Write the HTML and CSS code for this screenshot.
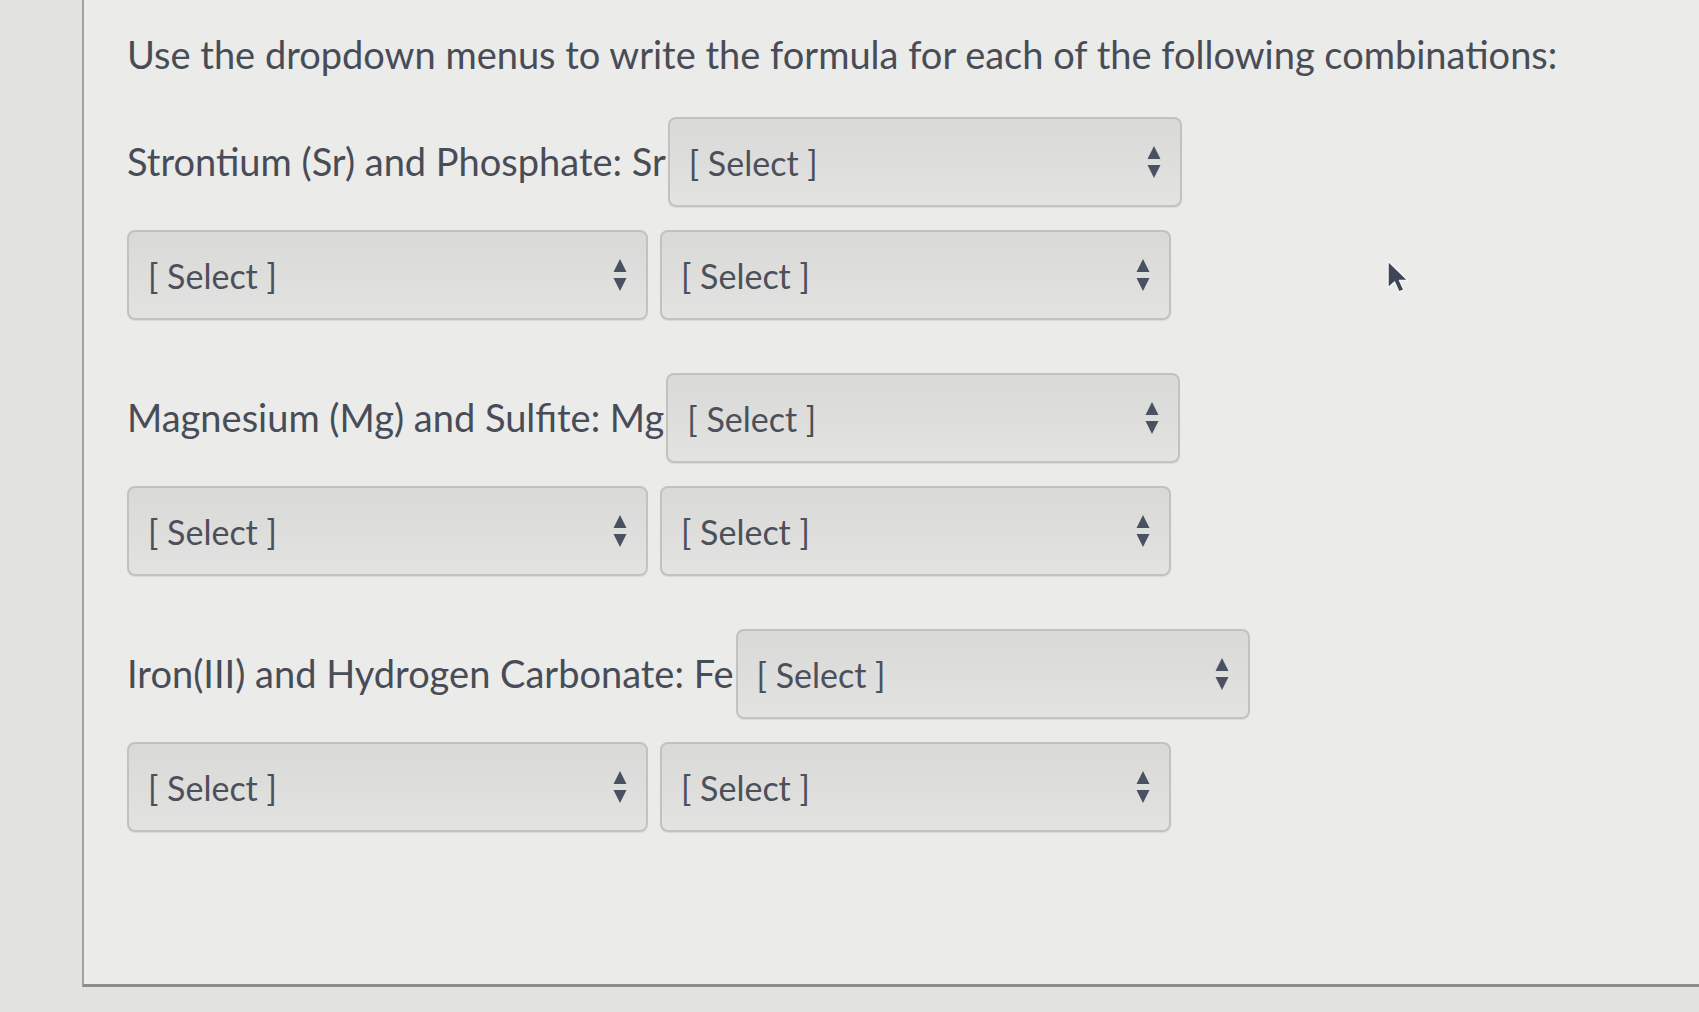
FILE: index.html
```html
<!DOCTYPE html>
<html lang="en">
<head>
<meta charset="utf-8">
<title>Formula dropdowns</title>
<link rel="stylesheet" href="styles.css">
</head>
<body>
<div class="page">
  <div class="frame">
    <p class="title">Use the dropdown menus to write the formula for each of the following combinations:</p>

    <div class="group">
      <div class="row first">
        <span class="label">Strontium (Sr) and Phosphate: Sr</span>
        <div class="select wide1"><span class="val">[ Select ]</span><svg class="arrows" viewBox="0 0 14 36" width="14" height="36"><path d="M7 2 L13.5 15 L0.5 15 Z"/><path d="M0.5 21 L13.5 21 L7 34 Z"/></svg></div>
      </div>
      <div class="row second">
        <div class="select wide2"><span class="val">[ Select ]</span><svg class="arrows" viewBox="0 0 14 36" width="14" height="36"><path d="M7 2 L13.5 15 L0.5 15 Z"/><path d="M0.5 21 L13.5 21 L7 34 Z"/></svg></div>
        <div class="select wide3"><span class="val">[ Select ]</span><svg class="arrows" viewBox="0 0 14 36" width="14" height="36"><path d="M7 2 L13.5 15 L0.5 15 Z"/><path d="M0.5 21 L13.5 21 L7 34 Z"/></svg></div>
      </div>
    </div>

    <div class="group">
      <div class="row first">
        <span class="label">Magnesium (Mg) and Sulfite: Mg</span>
        <div class="select wide1"><span class="val">[ Select ]</span><svg class="arrows" viewBox="0 0 14 36" width="14" height="36"><path d="M7 2 L13.5 15 L0.5 15 Z"/><path d="M0.5 21 L13.5 21 L7 34 Z"/></svg></div>
      </div>
      <div class="row second">
        <div class="select wide2"><span class="val">[ Select ]</span><svg class="arrows" viewBox="0 0 14 36" width="14" height="36"><path d="M7 2 L13.5 15 L0.5 15 Z"/><path d="M0.5 21 L13.5 21 L7 34 Z"/></svg></div>
        <div class="select wide3"><span class="val">[ Select ]</span><svg class="arrows" viewBox="0 0 14 36" width="14" height="36"><path d="M7 2 L13.5 15 L0.5 15 Z"/><path d="M0.5 21 L13.5 21 L7 34 Z"/></svg></div>
      </div>
    </div>

    <div class="group">
      <div class="row first">
        <span class="label">Iron(III) and Hydrogen Carbonate: Fe</span>
        <div class="select wide1"><span class="val">[ Select ]</span><svg class="arrows" viewBox="0 0 14 36" width="14" height="36"><path d="M7 2 L13.5 15 L0.5 15 Z"/><path d="M0.5 21 L13.5 21 L7 34 Z"/></svg></div>
      </div>
      <div class="row second">
        <div class="select wide2"><span class="val">[ Select ]</span><svg class="arrows" viewBox="0 0 14 36" width="14" height="36"><path d="M7 2 L13.5 15 L0.5 15 Z"/><path d="M0.5 21 L13.5 21 L7 34 Z"/></svg></div>
        <div class="select wide3"><span class="val">[ Select ]</span><svg class="arrows" viewBox="0 0 14 36" width="14" height="36"><path d="M7 2 L13.5 15 L0.5 15 Z"/><path d="M0.5 21 L13.5 21 L7 34 Z"/></svg></div>
      </div>
    </div>

    <svg class="cursor" viewBox="0 0 24 36" width="24" height="36"><path d="M2 2 L2 29 L8.5 23 L13 33 L18 31 L13.5 21.5 L22 21.5 Z"/></svg>
  </div>
</div>
</body>
</html>
```

FILE: styles.css
```css
html, body {
  margin: 0;
  padding: 0;
}
body {
  background: #e2e2e0;
  font-family: Lato, "Open Sans", sans-serif;
  color: #484c56;
}
.page {
  width: 1699px;
  height: 1012px;
  overflow: hidden;
}
.frame {
  position: relative;
  margin-left: 82px;
  height: 987px;
  box-sizing: border-box;
  background: #ebebe9;
  border-left: 2px solid #a2a2a0;
  border-bottom: 3px solid #8c8c8a;
  padding: 28px 0 0 43px;
}
.title {
  margin: 0;
  font-size: 38px;
  line-height: 52px;
}
.group {
  margin-top: 37px;
}
.group + .group {
  margin-top: 53px;
}
.row {
  display: flex;
}
.row.first {
  align-items: baseline;
}
.row.second {
  align-items: center;
  margin-top: 23px;
  gap: 12px;
}
.label {
  font-size: 38px;
  white-space: nowrap;
}
.select {
  box-sizing: border-box;
  height: 90px;
  display: flex;
  align-items: center;
  justify-content: space-between;
  padding: 0 19px 0 19px;
  border: 2px solid #c2c2c0;
  border-radius: 8px;
  background: linear-gradient(#d9d9d7, #dededc 55%, #e3e3e1);
  box-shadow: 0 1px 1px rgba(0,0,0,0.08);
}
.select .val {
  font-size: 34px;
  color: #4c505a;
}
.wide1 {
  width: 514px;
  margin-left: 2px;
}
.wide2 {
  width: 521px;
}
.wide3 {
  width: 511px;
}
.arrows {
  fill: #4a5262;
}
.cursor {
  position: absolute;
  left: 1302px;
  top: 259px;
  fill: #3e4656;
  stroke: #f4f4f4;
  stroke-width: 1.5;
  stroke-linejoin: round;
}
```
